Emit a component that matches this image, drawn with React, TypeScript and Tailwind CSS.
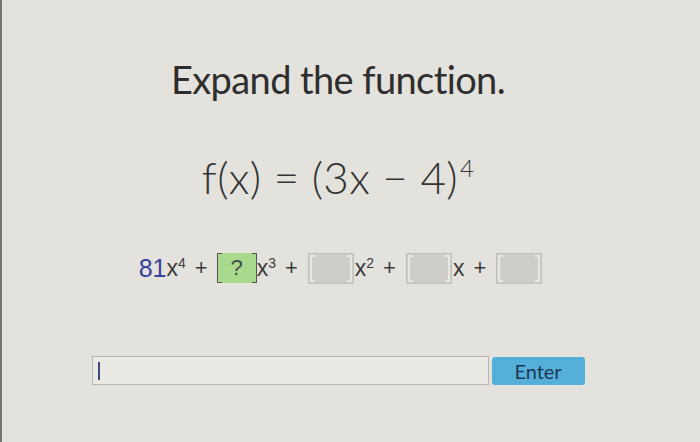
export default function App() {
  const font = { fontFamily: 'Lato, "Open Sans", sans-serif' };
  return (
    <div className="w-[700px] h-[442px] overflow-hidden bg-[#e4e2dd] flex" style={font}>
      <div className="w-[2px] h-full bg-[#77746f]" />
      <div className="w-[672px] flex flex-col items-center">
        <h1 className="mt-[56px] text-[38px] leading-[46px] text-[#2e2e2e] tracking-[-0.6px]">
          Expand the function.
        </h1>

        <div className="mt-[50px] h-[50px] flex items-center text-[44px] font-light text-[#333] leading-none tracking-[0.3px]">
          <span>f(x) = (3x − 4)</span>
          <span className="text-[24px] font-light self-start mt-[4px] ml-[2px]">4</span>
        </div>

        <div
          className="mt-[50px] ml-[6px] flex items-center h-[32px] text-[23px] text-[#3c3c3c] leading-none"
          style={{ fontFamily: '"Liberation Sans", Arial, sans-serif' }}
        >
          <span className="text-[#3b3f9e] text-[25px]">81</span>
          <span>x<sup className="text-[14px] relative -top-[8px]">4</sup></span>
          <span className="mx-[9px] text-[22px]">+</span>
          <Box active />
          <span>x<sup className="text-[14px] relative -top-[8px]">3</sup></span>
          <span className="mx-[9px] text-[22px]">+</span>
          <Box />
          <span>x<sup className="text-[14px] relative -top-[8px]">2</sup></span>
          <span className="mx-[9px] text-[22px]">+</span>
          <Box />
          <span>x</span>
          <span className="mx-[9px] text-[22px]">+</span>
          <Box />
        </div>

        <div className="mt-[72px] flex items-center gap-[3px]">
          <div className="w-[397px] h-[29px] bg-[#ebe9e3] border border-[#b9b6b0] flex items-center pl-[5px]">
            <div className="w-[2px] h-[18px] bg-[#3b4a7a]" />
          </div>
          <button className="w-[93px] h-[28px] rounded-[3px] bg-[#55b0d9] text-[#1d3655] text-[20px] leading-none">
            Enter
          </button>
        </div>
      </div>
    </div>
  );
}

function Box({ active = false }: { active?: boolean }) {
  if (active) {
    return (
      <div className="relative w-[40px] h-[30px] bg-[#a9d98d] flex items-center justify-center text-[22px] text-[#4a4a4a]">
        <div className="absolute left-0 top-0 bottom-0 w-[5px] border-l border-y border-[#555]" />
        <div className="absolute right-0 top-0 bottom-0 w-[5px] border-r border-y border-[#555]" />
        ?
      </div>
    );
  }
  return (
    <div className="relative w-[46px] h-[31px] bg-[#cfcdc8] border border-[#c2c0bb] mx-[1px]">
      <div className="absolute left-[1px] top-[1px] bottom-[1px] w-[5px] border-l-2 border-y-2 border-[#e8e6e1]" />
      <div className="absolute right-[1px] top-[1px] bottom-[1px] w-[5px] border-r-2 border-y-2 border-[#e8e6e1]" />
    </div>
  );
}
